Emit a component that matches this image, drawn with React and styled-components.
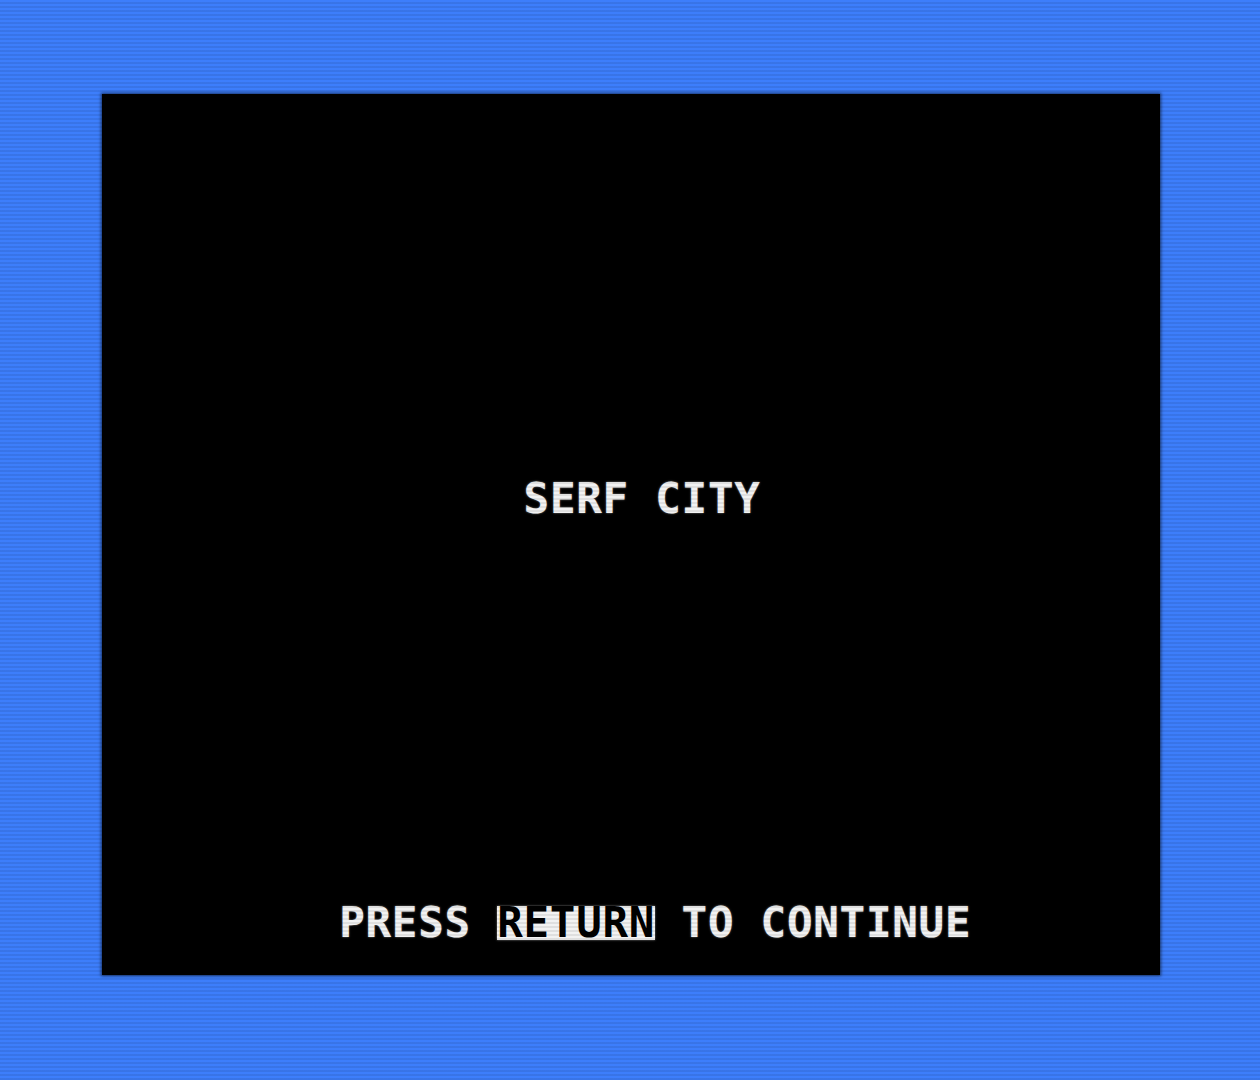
import styled, { createGlobalStyle } from "styled-components";

const CELL = 26.35;

const GlobalStyle = createGlobalStyle`
  html, body {
    margin: 0;
    padding: 0;
    background: #3d7efb;
  }
`;

const Monitor = styled.main`
  position: relative;
  width: 1260px;
  height: 1080px;
  box-sizing: border-box;
  padding: 94px 100px 0 102px;
  background: #3d7efb;
  overflow: hidden;
`;

const Screen = styled.section`
  width: 1058px;
  height: 881px;
  background: #000;
  display: grid;
  grid-template-rows: repeat(24, 35.37px);
  box-shadow: 0 0 3px 1px rgba(0, 0, 0, 0.6);
  font-family: "DejaVu Sans Mono", "Liberation Mono", monospace;
  font-weight: 700;
  font-size: 42.5px;
  letter-spacing: 0.75px;
  color: #f2f2f2;
`;

const Line = styled.div`
  grid-row: ${({ row }) => row + 1};
  display: flex;
  align-items: flex-start;
  padding-left: ${({ col }) => col * CELL}px;
  white-space: pre;
`;

const Chars = styled.span`
  display: block;
  line-height: 29px;
  height: 29px;
  padding-top: 1px;
  text-shadow: 0 0 2px rgba(255, 255, 255, 0.55);
`;

const Inverse = styled(Chars)`
  background: #f2f2f2;
  color: #000;
  text-shadow: none;
  padding-top: 2px;
  height: 32px;
  margin-top: -1px;
  box-shadow: 0 0 2px rgba(255, 255, 255, 0.5);
`;

const Scanlines = styled.div`
  position: absolute;
  inset: 0;
  pointer-events: none;
  background: repeating-linear-gradient(
    to bottom,
    rgba(0, 0, 0, 0) 0px,
    rgba(0, 0, 0, 0) 2px,
    rgba(0, 0, 0, 0.08) 2px,
    rgba(0, 0, 0, 0.08) 4px
  );
`;

export default function App() {
  return (
    <>
      <GlobalStyle />
      <Monitor>
        <Screen>
          <Line row={11} col={16}>
            <Chars>SERF CITY</Chars>
          </Line>
          <Line row={23} col={9}>
            <Chars>PRESS </Chars>
            <Inverse>RETURN</Inverse>
            <Chars> TO CONTINUE</Chars>
          </Line>
        </Screen>
        <Scanlines />
      </Monitor>
    </>
  );
}
